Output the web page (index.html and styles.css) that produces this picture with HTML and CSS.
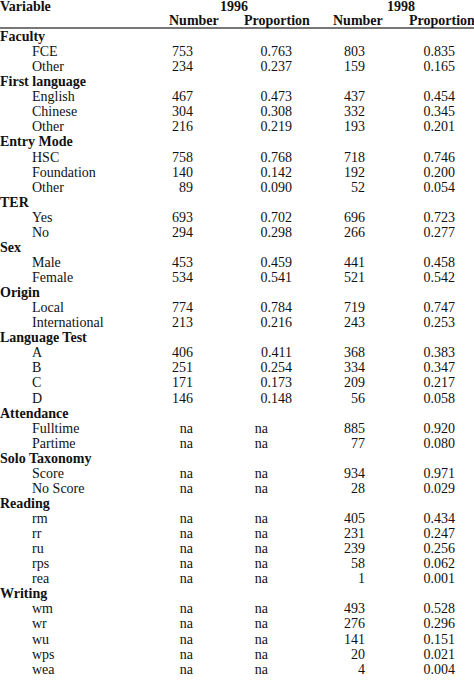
FILE: index.html
```html
<!DOCTYPE html>
<html>
<head>
<meta charset="utf-8">
<link rel="stylesheet" href="styles.css">
</head>
<body>
<div class="sheet">
  <div class="head head-years"><span>Variable</span><span>1996</span><span>1998</span></div>
  <div class="head head-cols"><span></span><span>Number</span><span>Proportion</span><span>Number</span><span>Proportion</span></div>
  <div class="body">
    <div class="row group"><span>Faculty</span></div>
    <div class="row"><span class="lab">FCE</span><span>753</span><span>0.763</span><span>803</span><span>0.835</span></div>
    <div class="row"><span class="lab">Other</span><span>234</span><span>0.237</span><span>159</span><span>0.165</span></div>
    <div class="row group"><span>First language</span></div>
    <div class="row"><span class="lab">English</span><span>467</span><span>0.473</span><span>437</span><span>0.454</span></div>
    <div class="row"><span class="lab">Chinese</span><span>304</span><span>0.308</span><span>332</span><span>0.345</span></div>
    <div class="row"><span class="lab">Other</span><span>216</span><span>0.219</span><span>193</span><span>0.201</span></div>
    <div class="row group"><span>Entry Mode</span></div>
    <div class="row"><span class="lab">HSC</span><span>758</span><span>0.768</span><span>718</span><span>0.746</span></div>
    <div class="row"><span class="lab">Foundation</span><span>140</span><span>0.142</span><span>192</span><span>0.200</span></div>
    <div class="row"><span class="lab">Other</span><span>89</span><span>0.090</span><span>52</span><span>0.054</span></div>
    <div class="row group"><span>TER</span></div>
    <div class="row"><span class="lab">Yes</span><span>693</span><span>0.702</span><span>696</span><span>0.723</span></div>
    <div class="row"><span class="lab">No</span><span>294</span><span>0.298</span><span>266</span><span>0.277</span></div>
    <div class="row group"><span>Sex</span></div>
    <div class="row"><span class="lab">Male</span><span>453</span><span>0.459</span><span>441</span><span>0.458</span></div>
    <div class="row"><span class="lab">Female</span><span>534</span><span>0.541</span><span>521</span><span>0.542</span></div>
    <div class="row group"><span>Origin</span></div>
    <div class="row"><span class="lab">Local</span><span>774</span><span>0.784</span><span>719</span><span>0.747</span></div>
    <div class="row"><span class="lab">International</span><span>213</span><span>0.216</span><span>243</span><span>0.253</span></div>
    <div class="row group"><span>Language Test</span></div>
    <div class="row"><span class="lab">A</span><span>406</span><span>0.411</span><span>368</span><span>0.383</span></div>
    <div class="row"><span class="lab">B</span><span>251</span><span>0.254</span><span>334</span><span>0.347</span></div>
    <div class="row"><span class="lab">C</span><span>171</span><span>0.173</span><span>209</span><span>0.217</span></div>
    <div class="row"><span class="lab">D</span><span>146</span><span>0.148</span><span>56</span><span>0.058</span></div>
    <div class="row group"><span>Attendance</span></div>
    <div class="row"><span class="lab">Fulltime</span><span>na</span><span class="na">na</span><span>885</span><span>0.920</span></div>
    <div class="row"><span class="lab">Partime</span><span>na</span><span class="na">na</span><span>77</span><span>0.080</span></div>
    <div class="row group"><span>Solo Taxonomy</span></div>
    <div class="row"><span class="lab">Score</span><span>na</span><span class="na">na</span><span>934</span><span>0.971</span></div>
    <div class="row"><span class="lab">No Score</span><span>na</span><span class="na">na</span><span>28</span><span>0.029</span></div>
    <div class="row group"><span>Reading</span></div>
    <div class="row"><span class="lab">rm</span><span>na</span><span class="na">na</span><span>405</span><span>0.434</span></div>
    <div class="row"><span class="lab">rr</span><span>na</span><span class="na">na</span><span>231</span><span>0.247</span></div>
    <div class="row"><span class="lab">ru</span><span>na</span><span class="na">na</span><span>239</span><span>0.256</span></div>
    <div class="row"><span class="lab">rps</span><span>na</span><span class="na">na</span><span>58</span><span>0.062</span></div>
    <div class="row"><span class="lab">rea</span><span>na</span><span class="na">na</span><span>1</span><span>0.001</span></div>
    <div class="row group"><span>Writing</span></div>
    <div class="row"><span class="lab">wm</span><span>na</span><span class="na">na</span><span>493</span><span>0.528</span></div>
    <div class="row"><span class="lab">wr</span><span>na</span><span class="na">na</span><span>276</span><span>0.296</span></div>
    <div class="row"><span class="lab">wu</span><span>na</span><span class="na">na</span><span>141</span><span>0.151</span></div>
    <div class="row"><span class="lab">wps</span><span>na</span><span class="na">na</span><span>20</span><span>0.021</span></div>
    <div class="row"><span class="lab">wea</span><span>na</span><span class="na">na</span><span>4</span><span>0.004</span></div>
  </div>
</div>
</body>
</html>
```

FILE: styles.css
```css
html, body {
  margin: 0;
  padding: 0;
  background: #ffffff;
}

.sheet {
  width: 474px;
  font-family: "Liberation Serif", "Times New Roman", serif;
  font-size: 14px;
  color: #111111;
  overflow: hidden;
}

.head {
  display: grid;
  font-weight: bold;
  white-space: nowrap;
}

.head-years {
  grid-template-columns: 220px 167px 87px;
  line-height: 14px;
}

.head-cols {
  grid-template-columns: 169px 75px 89px 76px 65px;
  line-height: 13px;
  border-bottom: 2px solid #777777;
}

.row {
  display: grid;
  grid-template-columns: 150px 43px 99px 73px 90px 19px;
  line-height: 15.07px;
  white-space: nowrap;
}

.row span {
  text-align: right;
}

.row span.lab {
  text-align: left;
  padding-left: 32px;
}

.row span.na {
  padding-right: 24px;
}

.group span {
  grid-column: 1 / -1;
  text-align: left;
  font-weight: bold;
}
```
